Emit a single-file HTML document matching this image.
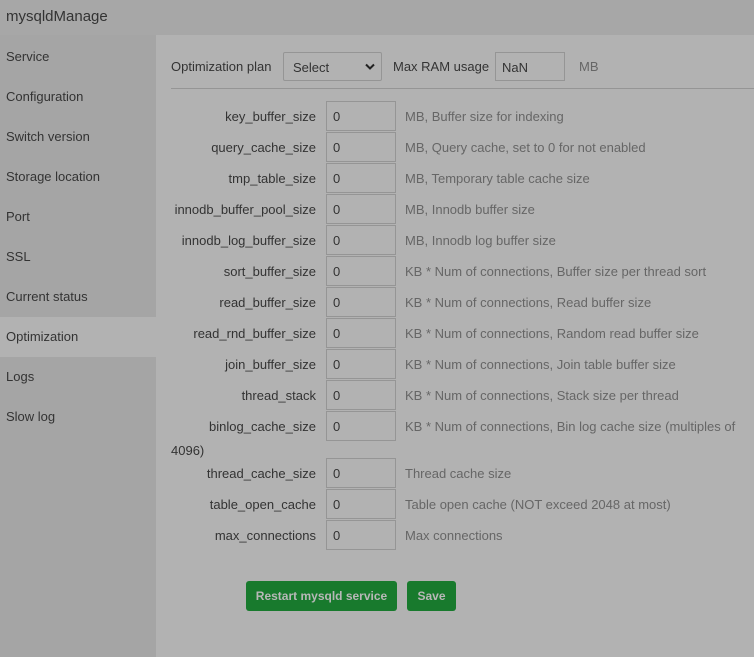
<!DOCTYPE html>
<html><head><style>
*{box-sizing:border-box;margin:0;padding:0}
body{width:754px;height:657px;background:#b2b2b2;font-family:"Liberation Sans",sans-serif;font-size:13px;color:#333;position:relative;overflow:hidden}
.hd{position:absolute;left:0;top:0;width:754px;height:35px;background:#a7a7a7;font-size:15px;color:#333;padding:8px 6px}
.sb{position:absolute;left:0;top:37px;width:156px;height:620px;background:#a5a5a5}
.sbbg{position:absolute;left:0;top:35px;width:156px;height:4px;background:#a5a5a5}
.sb div{height:40px;line-height:40px;padding-left:6px;color:#333}
.sb .a{background:#b2b2b2}
.ab{position:absolute}
.inp{position:absolute;width:70px;height:30px;border:1px solid #959595;padding:7px 6px;color:#333}
.lb{position:absolute;right:438px;text-align:right;white-space:nowrap}
.ds{position:absolute;left:405px;color:#666;white-space:nowrap}
.btn{position:absolute;top:581px;height:30px;background:#187a2d;color:#b8b8b8;border-radius:3px;font-weight:bold;font-size:12px;line-height:31px;text-align:center}
</style></head><body>
<div class="hd">mysqldManage</div>
<div class="sbbg"></div>
<div class="sb">
<div>Service</div><div>Configuration</div><div>Switch version</div><div>Storage location</div><div>Port</div><div>SSL</div><div>Current status</div><div class="a">Optimization</div><div>Logs</div><div>Slow log</div>
</div>
<div class="ab" style="left:171px;top:59px">Optimization plan</div>
<div class="ab" style="left:283px;top:52px;width:99px;height:29px;border:1px solid #959595;border-radius:2px;padding:7px 9px">Select<svg style="position:absolute;right:6px;top:10px" width="10" height="7" viewBox="0 0 10 7"><path d="M1 1.5L5 5.5L9 1.5" stroke="#222" stroke-width="2" fill="none"/></svg></div>
<div class="ab" style="left:393px;top:59px">Max RAM usage</div>
<div class="inp" style="left:495px;top:52px;height:29px">NaN</div>
<div class="ab" style="left:579px;top:59px;color:#666">MB</div>
<div class="ab" style="left:171px;top:88px;width:583px;height:1px;background:#959595"></div>
<div id="rows"></div>
<div class="ab" style="left:171px;top:443px">4096)</div>
<div class="btn" style="left:246px;width:151px">Restart mysqld service</div>
<div class="btn" style="left:407px;width:49px">Save</div>
<script>
var r=[["key_buffer_size","MB, Buffer size for indexing",101],["query_cache_size","MB, Query cache, set to 0 for not enabled",132],["tmp_table_size","MB, Temporary table cache size",163],["innodb_buffer_pool_size","MB, Innodb buffer size",194],["innodb_log_buffer_size","MB, Innodb log buffer size",225],["sort_buffer_size","KB * Num of connections, Buffer size per thread sort",256],["read_buffer_size","KB * Num of connections, Read buffer size",287],["read_rnd_buffer_size","KB * Num of connections, Random read buffer size",318],["join_buffer_size","KB * Num of connections, Join table buffer size",349],["thread_stack","KB * Num of connections, Stack size per thread",380],["binlog_cache_size","KB * Num of connections, Bin log cache size (multiples of",411],["thread_cache_size","Thread cache size",458],["table_open_cache","Table open cache (NOT exceed 2048 at most)",489],["max_connections","Max connections",520]];
var h="";r.forEach(function(x){var t=x[2];h+='<div class="lb" style="top:'+(t+8)+'px">'+x[0]+'</div><div class="inp" style="left:326px;top:'+t+'px">0</div><div class="ds" style="top:'+(t+8)+'px">'+x[1]+'</div>';});
document.getElementById("rows").innerHTML=h;
</script>
</body></html>
